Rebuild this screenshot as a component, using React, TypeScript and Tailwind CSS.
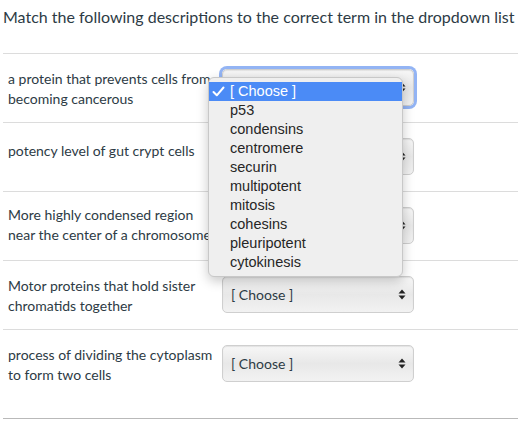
import React from 'react';

type Row = {
  lines: string[];
  offset?: string;
  focused?: boolean;
  last?: boolean;
};

const rows: Row[] = [
  { lines: ['a protein that prevents cells from', 'becoming cancerous'], focused: true },
  { lines: ['potency level of gut crypt cells'], offset: 'pt-[3px]' },
  { lines: ['More highly condensed region', 'near the center of a chromosome'], offset: '-mt-[2px]' },
  { lines: ['Motor proteins that hold sister', 'chromatids together'] },
  { lines: ['process of dividing the cytoplasm', 'to form two cells'], last: true },
];

const options = [
  '[ Choose ]',
  'p53',
  'condensins',
  'centromere',
  'securin',
  'multipotent',
  'mitosis',
  'cohesins',
  'pleuripotent',
  'cytokinesis',
];

function Arrows() {
  return (
    <svg width="8" height="11" viewBox="0 0 8 11" className="text-[#222]">
      <path d="M4 0.5 L7.5 4.5 H0.5 Z" fill="currentColor" />
      <path d="M4 10.5 L7.5 6.5 H0.5 Z" fill="currentColor" />
    </svg>
  );
}

function Check() {
  return (
    <svg width="13" height="11" viewBox="0 0 13 11" fill="none">
      <path d="M1.5 6 L4.8 9.3 L11.5 1.5" stroke="white" strokeWidth="2" strokeLinecap="round" strokeLinejoin="round" />
    </svg>
  );
}

function SelectBox({ focused }: { focused?: boolean }) {
  return (
    <div
      className={`w-[192px] h-[37px] shrink-0 rounded-[5px] border border-[#cfcfcf] bg-gradient-to-b from-[#f7f7f7] via-[#e8e8e8] to-[#f2f2f2] shadow-[inset_0_1px_1px_rgba(0,0,0,0.08)] flex items-center justify-between pl-[8px] pr-[7px] ${
        focused ? 'ring-[3px] ring-[#93b4f4]' : ''
      }`}
    >
      <span className="text-[14px] text-[#2d3b45]">[ Choose ]</span>
      <Arrows />
    </div>
  );
}

function Menu() {
  return (
    <div className="absolute left-[208px] top-[77px] w-[195px] py-[4px] rounded-[6px] bg-[#efefef] border border-[#c8c8c8] shadow-[0_4px_12px_rgba(0,0,0,0.22)] font-['Liberation_Sans',sans-serif] text-[14.5px]">
      {options.map((o, i) => (
        <div
          key={o}
          className={`h-[19px] flex items-center ${i === 0 ? 'bg-[#4b8bf6] text-white' : 'text-[#262626]'}`}
        >
          <span className="w-[21px] pl-[3px] flex items-center">{i === 0 ? <Check /> : null}</span>
          <span className="leading-none">{o}</span>
        </div>
      ))}
    </div>
  );
}

export default function App() {
  return (
    <div className="relative w-[518px] h-[421px] overflow-hidden bg-white font-['Lato',sans-serif] text-[#2d3b45]">
      <div className="pl-[3px] pt-[5px] mb-[24px] text-[16px] leading-6 whitespace-nowrap">
        Match the following descriptions to the correct term in the dropdown list
      </div>

      <div className="ml-[3px]">
        {rows.map((r, i) => (
          <div
            key={i}
            className={`flex items-start border-t border-[#dcdcdc] pl-[5px] pt-[15px] ${
              r.last ? 'h-[90px] border-b border-b-[#b9b9b9]' : 'h-[69px]'
            }`}
          >
            <div className={`w-[214px] shrink-0 text-[14px] leading-5 whitespace-nowrap ${r.offset ?? ''}`}>
              {r.lines.map((l) => (
                <div key={l}>{l}</div>
              ))}
            </div>
            <SelectBox focused={r.focused} />
          </div>
        ))}
      </div>

      <Menu />
    </div>
  );
}
